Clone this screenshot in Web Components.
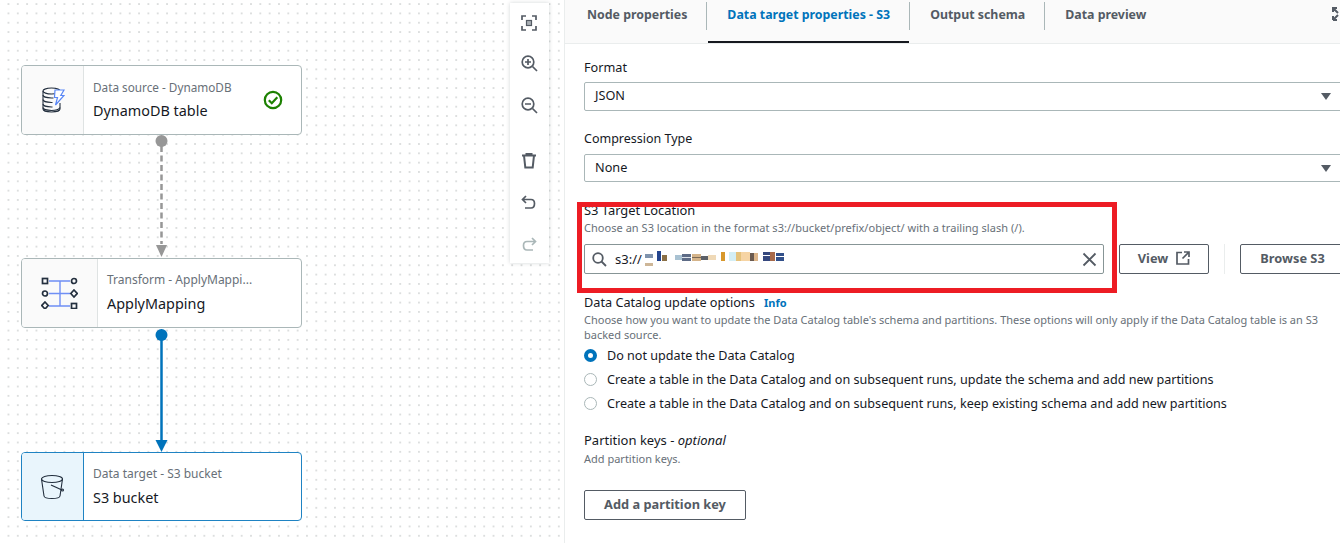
<!DOCTYPE html>
<html>
<head>
<meta charset="utf-8">
<title>Glue job</title>
<style>
  html, body { margin: 0; height: 100%; background: #fff; }
  body { font-family: "Noto Sans", "Open Sans", sans-serif; font-size: 13px; color: #16191f; overflow: hidden; }
</style>
</head>
<body>
<job-page>
  <job-canvas slot="canvas">
    <job-node slot="nodes" style="top:65px" kind="Data source - DynamoDB" ks="11.75" name="DynamoDB table" icon="dynamo" status="ok"></job-node>
    <job-node slot="nodes" style="top:258px" kind="Transform - ApplyMappi..." name="ApplyMapping" icon="mapping" wide></job-node>
    <job-node slot="nodes" style="top:452px" kind="Data target - S3 bucket" name="S3 bucket" icon="bucket" selected></job-node>
  </job-canvas>
  <job-panel slot="panel"></job-panel>
</job-page>

<script>
const ICONS = {
  dynamo: `<svg width="24" height="26" viewBox="0 0 24 26" fill="none" stroke="#232f3e" stroke-width="1.100">
      <ellipse cx="10.500" cy="4" rx="8.500" ry="3"/><path d="M2 4v18c0 1.700 3.800 3 8.500 3s8.500-1.300 8.500-3v-6"/>
      <path d="M2 8c0 1.700 3.800 3 8.500 3h2M2 12.500c0 1.700 3.800 3 8.500 3h1M2 17c0 1.700 3.800 3 8.500 3h1M2 20.500c0 1.700 3.800 3 8.500 3s7.500-1 8.500-3"/>
      <path d="M14 3h9l-3.200 5.500h3.200l-8.500 9.500 2-7.500h-3z" fill="#fff" stroke="#5a87f5" stroke-width="1.200"/></svg>`,
  mapping: `<svg width="37" height="32" viewBox="0 0 37 32" fill="none" stroke="#232f3e" stroke-width="1.700">
      <path d="M8 4h21M8 16.500h21M8 29h21M19 4v25" stroke="#6f8ff5" stroke-width="1.400"/>
      <rect x="1.500" y="1.500" width="5" height="5"/><circle cx="33" cy="4" r="2.500"/>
      <circle cx="4" cy="16.500" r="2.500"/><path d="M33 13l3.200 3.500-3.200 3.500-3.200-3.500z"/>
      <path d="M4 25.500l3.200 3.500-3.200 3.500-3.200-3.500z" transform="translate(0 -.5)"/><rect x="30.500" y="26.500" width="5" height="5"/></svg>`,
  bucket: `<svg width="24" height="26" viewBox="0 0 24 26" fill="none" stroke="#232f3e" stroke-width="1.100">
      <ellipse cx="11" cy="5" rx="10.500" ry="3.500"/><path d="M.5 5l2.500 17c.2 1.300 3.500 2.500 8 2.500s7.800-1.200 8-2.500L21.500 5"/>
      <path d="M10 11l11 5" stroke-width="1.300"/><circle cx="21.500" cy="16" r="1"/></svg>`
};

class JobPage extends HTMLElement {
  constructor() {
    super();
    this.attachShadow({ mode: 'open' });
    this.shadowRoot.innerHTML = `
      <style>
        :host { display: flex; width: 1340px; height: 543px; overflow: hidden; position: relative; }
        .frame { position: absolute; left: 577px; top: 202px; width: 530px; height: 81px; border: 5px solid #ed1c24; pointer-events: none; }
      </style>
      <slot name="canvas"></slot>
      <slot name="panel"></slot>
      <div class="frame"></div>
    `;
  }
}

class JobCanvas extends HTMLElement {
  constructor() {
    super();
    this.attachShadow({ mode: 'open' });
    this.shadowRoot.innerHTML = `
      <style>
        :host {
          display: block; position: relative; flex: 0 0 564px; height: 543px;
          background-image: radial-gradient(circle at center, #dcdede 0.9px, transparent 1.2px);
          background-size: 9.33px 9.33px;
          background-position: 3.800px -0.600px;
        }
        svg.links { position: absolute; left: 0; top: 0; }
      </style>
      <svg class="links" width="564" height="543">
        <circle cx="161.500" cy="141" r="6" fill="#979797"/>
        <path d="M161.500 146V244" stroke="#979797" stroke-width="2.500" stroke-dasharray="6 3.500"/>
        <path d="M156 245h11l-5.500 12z" fill="#979797"/>
        <circle cx="161.500" cy="335" r="6" fill="#0073bb"/>
        <path d="M161.500 340V441" stroke="#0073bb" stroke-width="2.500"/>
        <path d="M155.500 440h12l-6 12z" fill="#0073bb"/>
      </svg>
      <slot name="nodes"></slot>
      <job-toolbar></job-toolbar>
    `;
  }
}

class JobNode extends HTMLElement {
  constructor() {
    super();
    this.attachShadow({ mode: 'open' });
  }
  connectedCallback() {
    const selected = this.hasAttribute('selected');
    const wide = this.hasAttribute('wide');
    const ok = this.getAttribute('status') === 'ok';
    const size = this.getAttribute('ks') || '12';
    this.shadowRoot.innerHTML = `
      <style>
        :host { display: flex; position: absolute; left: 21px; width: 281px; height: ${selected ? 69 : 70}px; box-sizing: border-box;
          background: #fff; border: 1px solid ${selected ? '#1f83c3' : '#aab7b8'}; border-radius: 4px; overflow: hidden; }
        .icon { flex: 0 0 ${wide ? 75 : 61}px; display: flex; align-items: center; justify-content: center;
          background: ${selected ? '#e9f5fc' : '#fafafa'}; border-right: 1.500px solid ${selected ? '#1f83c3' : '#dfe3e3'}; }
        .text { flex: 1; padding: 13px 0 0 9px; }
        .kind { font-size: ${size}px; line-height: 16px; color: #687078; }
        .name { font-size: 14.400px; line-height: 20px; margin-top: 6px; color: #16191f; }
        .status { position: absolute; right: 18px; top: 24px; width: 20px; height: 20px; }
      </style>
      <div class="icon">${ICONS[this.getAttribute('icon')]}</div>
      <div class="text">
        <div class="kind">${this.getAttribute('kind')}</div>
        <div class="name">${this.getAttribute('name')}</div>
      </div>
      ${ok ? `<svg class="status" viewBox="0 0 20 20" fill="none" stroke="#1d8102" stroke-width="2.200">
        <circle cx="10" cy="10" r="8.200"/><path d="M5.800 10.200l3 3 5.500-6"/></svg>` : ''}
    `;
  }
}

class JobToolbar extends HTMLElement {
  constructor() {
    super();
    this.attachShadow({ mode: 'open' });
    this.shadowRoot.innerHTML = `
      <style>
        :host { display: flex; flex-direction: column; align-items: center; position: absolute; left: 510px; top: 3px;
          width: 39px; height: 260px; background: #fff; box-shadow: 0 0 4px rgba(0,28,36,.18); }
        svg { position: absolute; left: 11px; fill: none; stroke: #545b64; stroke-width: 1.700; }
      </style>
      <svg style="top:12px" width="16" height="16" viewBox="0 0 16 16">
        <path d="M1 5V1h4M11 1h4v4M15 11v4h-4M5 15H1v-4"/><rect x="5.500" y="5.500" width="5" height="5" fill="#aab0b5" stroke-width="1.200"/></svg>
      <svg style="top:52px" width="17" height="17" viewBox="0 0 17 17">
        <circle cx="7" cy="7" r="5.800"/><path d="M11.500 11.500l4.500 4.500M4 7h6M7 4v6"/></svg>
      <svg style="top:94px" width="17" height="17" viewBox="0 0 17 17">
        <circle cx="7" cy="7" r="5.800"/><path d="M11.500 11.500l4.500 4.500M4 7h6"/></svg>
      <svg style="top:150px" width="16" height="16" viewBox="0 0 16 16">
        <path d="M1 2.500h14M3 2.500l1.300 12h7.400l1.300-12M5.500 2.500V1h5v1.500" stroke-width="2"/></svg>
      <svg style="top:192px" width="16" height="16" viewBox="0 0 16 16">
        <path d="M5 1L1.500 4.500 5 8M2 4.500h8c2.500 0 3.500 1.700 3.500 4s-1 4.500-3.500 4.500H4"/></svg>
      <svg style="top:234px;stroke:#aab7b8" width="16" height="16" viewBox="0 0 16 16">
        <path d="M11 1l3.500 3.500L11 8M14 4.500H6C3.500 4.500 2.500 6.200 2.500 8.500S3.500 13 6 13h6"/></svg>
    `;
  }
}

class JobTabs extends HTMLElement {
  constructor() {
    super();
    this.attachShadow({ mode: 'open' });
    const tabs = ['Node properties', 'Data target properties - S3', 'Output schema', 'Data preview'];
    this.shadowRoot.innerHTML = `
      <style>
        :host { display: flex; position: relative; height: 44px; box-sizing: border-box; background: #fafafa;
          border-bottom: 1px solid #eaeded; padding-left: 2px; }
        .tab { position: relative; flex: none; box-sizing: border-box; height: 43px; padding: 6px 20px 0; font-size: 12.370px; line-height: 18px;
          font-weight: 700; color: #545b64; white-space: nowrap; }
        .tab + .tab::before { content: ""; position: absolute; left: -1px; top: 2px; height: 28px; width: 1px; background: #aab7b8; }
        .tab.on { color: #0073bb; }
        .tab.on::after { content: ""; position: absolute; left: 1px; right: 1px; bottom: 0; height: 2px; background: #16191f; }
        svg { position: absolute; left: 767px; top: 7px; }
      </style>
      ${tabs.map((t, i) => `<div class="tab${i === 1 ? ' on' : ''}">${t}</div>`).join('')}
      <svg width="14" height="14" viewBox="0 0 14 14" fill="none" stroke="#545b64" stroke-width="2">
        <path d="M1 5V1h4M1 13V9M1 13h4M1 1l5 5M1 13l5-5"/></svg>
    `;
  }
}

class JobSelect extends HTMLElement {
  constructor() {
    super();
    this.attachShadow({ mode: 'open' });
    this.shadowRoot.innerHTML = `
      <style>
        :host { display: flex; align-items: center; box-sizing: border-box; width: 770px; border: 1px solid #aab7b8; border-radius: 2px;
          padding: 0 10px 2px; font-size: 12.700px; color: #16191f; }
        span { flex: 1; }
        i { display: block; margin: 2px 12px 0 0; border: 5px solid transparent; border-top: 7px solid #545b64; border-bottom: 0; }
      </style>
      <span><slot></slot></span><i></i>
    `;
  }
}

class JobButton extends HTMLElement {
  constructor() {
    super();
    this.attachShadow({ mode: 'open' });
    this.shadowRoot.innerHTML = `
      <style>
        :host { display: inline-flex; flex: none; align-items: center; justify-content: center; gap: 8px; box-sizing: border-box; height: 30px;
          border: 1px solid #545b64; border-radius: 2px; background: #fff; color: #545b64; font-size: 12.800px; font-weight: 700; white-space: nowrap; padding-bottom: 3px; }
      </style>
      <slot></slot>
    `;
  }
}

class JobRadio extends HTMLElement {
  constructor() {
    super();
    this.attachShadow({ mode: 'open' });
  }
  connectedCallback() {
    const on = this.hasAttribute('checked');
    this.shadowRoot.innerHTML = `
      <style>
        :host { display: flex; align-items: center; gap: 10px; height: 24px; font-size: 12.600px; color: #16191f; white-space: nowrap; }
        i { display: block; box-sizing: border-box; width: 13px; height: 13px; border-radius: 50%;
          ${on ? 'border: 4px solid #0073bb; background: #fff;' : 'border: 1.500px solid #aab7b8; background: #fff;'} }
      </style>
      <i></i><span><slot></slot></span>
    `;
  }
}

class JobPanel extends HTMLElement {
  constructor() {
    super();
    this.attachShadow({ mode: 'open' });
    // pixelated blur over the redacted bucket name
    const blur = [[0,3,8,4,'#7f93ad'],[0,12,8,3,'#cdb697'],[12,0,4,10,'#24458f'],[17,4,5,6,'#8a6f45'],[30,4,7,5,'#a9c2d2'],[37,3,9,7,'#5d6b86'],[47,3,9,7,'#d5b48a'],[56,5,7,4,'#5c6068'],[63,4,8,5,'#efd9b7'],[76,1,4,9,'#d8982c'],[84,1,7,9,'#d3eef5'],[91,1,5,9,'#e5c27c'],[96,1,9,9,'#f6d4a4'],[105,2,4,8,'#6a5a50'],[109,2,4,8,'#dcb58a'],[118,1,7,9,'#36487e'],[125,1,5,9,'#a76a4b'],[131,2,8,8,'#32508a'],[118,4,7,1,'#fff'],[131,5,8,1,'#fff'],[37,6,9,1,'#dfe5ec'],[47,6,9,1,'#7d6a55']];
    this.shadowRoot.innerHTML = `
      <style>
        :host { display: block; position: relative; flex: 1; height: 543px; border-left: 1px solid #eaeded; overflow: hidden; }
        .body { padding-left: 19px; position: relative; }
        .label { font-size: 12.700px; line-height: 18px; color: #16191f; white-space: nowrap; }
        .desc { font-size: 11px; line-height: 15px; color: #687078; white-space: nowrap; }
        .info { color: #0073bb; font-size: 11px; font-weight: 700; margin-left: 6px; }
        job-select { height: 29px; }
        .s3 { display: flex; align-items: center; margin-top: 9px; height: 30px; }
        .input { display: flex; flex: none; align-items: center; box-sizing: border-box; width: 520px; height: 30px; border: 1px solid #879596; border-radius: 2px;
          padding: 0 6px 0 7px; font-size: 13px; }
        .input .v { margin: 0 3px 0 8px; }
        .input .x { margin-left: auto; }
        .rule { flex: none; width: 1px; height: 30px; background: #eaeded; margin: 0 15px; }
      </style>
      <job-tabs></job-tabs>
      <div class="body">
        <div class="label" style="margin-top:14px">Format</div>
        <job-select style="margin-top:6px;padding-bottom:3px">JSON</job-select>
        <div class="label" style="margin-top:19px;font-size:12.500px">Compression Type</div>
        <job-select style="margin-top:6px;height:28px">None</job-select>
        <div class="label" style="margin-top:19px;font-size:12.900px">S3 Target Location</div>
        <div class="desc" style="margin-top:1px;letter-spacing:.035px">Choose an S3 location in the format s3://bucket/prefix/object/ with a trailing slash (/).</div>
        <div class="s3">
          <div class="input">
            <svg width="15" height="15" viewBox="0 0 15 15" fill="none" stroke="#545b64" stroke-width="1.800"><circle cx="6" cy="6" r="4.800"/><path d="M9.500 9.500l4.500 4.500"/></svg>
            <span class="v">s3://</span>
            <svg width="140" height="16" viewBox="0 0 140 16">${blur.map(b => `<rect x="${b[0]}" y="${b[1]}" width="${b[2]}" height="${b[3]}" fill="${b[4]}"/>`).join('')}</svg>
            <svg class="x" width="15" height="15" viewBox="0 0 15 15" fill="none" stroke="#545b64" stroke-width="1.800"><path d="M1.500 1.500l12 12M13.500 1.500l-12 12"/></svg>
          </div>
          <job-button style="width:90px;margin-left:15px">View
            <svg width="14" height="14" viewBox="0 0 14 14" fill="none" stroke="#545b64" stroke-width="1.700"><path d="M6 1.500H1v11.500h11.500V8M8 1h5v5M13 1L6.500 7.500"/></svg>
          </job-button>
          <div class="rule"></div>
          <job-button style="width:105px">Browse S3</job-button>
        </div>
        <div class="label" style="margin-top:19px">Data Catalog update options <span class="info">Info</span></div>
        <div class="desc" style="margin-top:0;white-space:normal;width:740px">Choose how you want to update the Data Catalog table's schema and partitions. These options will only apply if the Data Catalog table is an S3 backed source.</div>
        <div style="margin-top:1px">
          <job-radio checked>Do not update the Data Catalog</job-radio>
          <job-radio>Create a table in the Data Catalog and on subsequent runs, update the schema and add new partitions</job-radio>
          <job-radio>Create a table in the Data Catalog and on subsequent runs, keep existing schema and add new partitions</job-radio>
        </div>
        <div class="label" style="margin-top:16px;font-size:13px">Partition keys - <em>optional</em></div>
        <div class="desc" style="margin-top:2px">Add partition keys.</div>
        <job-button style="width:162px;margin-top:24px">Add a partition key</job-button>
      </div>
    `;
  }
}

customElements.define('job-page', JobPage);
customElements.define('job-canvas', JobCanvas);
customElements.define('job-node', JobNode);
customElements.define('job-toolbar', JobToolbar);
customElements.define('job-tabs', JobTabs);
customElements.define('job-select', JobSelect);
customElements.define('job-button', JobButton);
customElements.define('job-radio', JobRadio);
customElements.define('job-panel', JobPanel);
</script>
</body>
</html>
